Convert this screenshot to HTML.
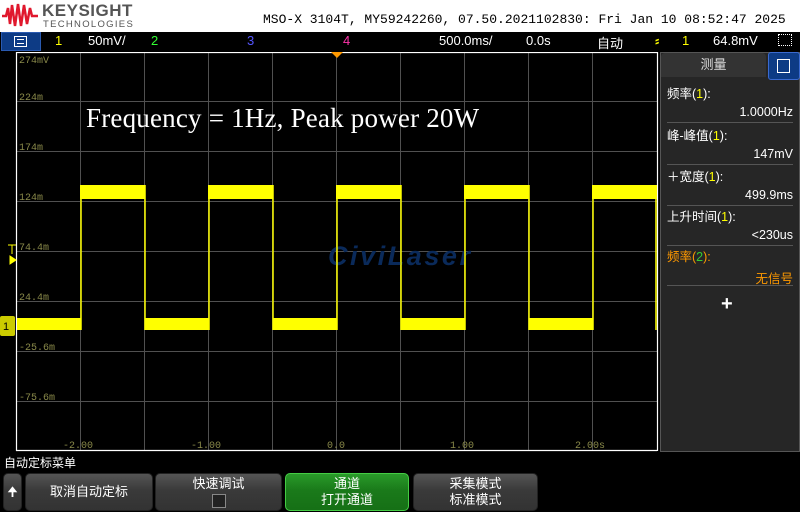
<!DOCTYPE html>
<html><head><meta charset="utf-8"><style>
*{margin:0;padding:0;box-sizing:border-box}
body{width:800px;height:512px;background:#000;overflow:hidden;position:relative;font-family:"Liberation Sans","Noto Sans CJK SC",sans-serif;color:#fff}
.abs{position:absolute}
.top{left:0;top:0;width:800px;height:32px;background:#fff}
.mono{font-family:"Liberation Mono","DejaVu Sans Mono",monospace}
.bar{left:0;top:32px;width:800px;height:20px;background:#000;font-size:13px}
.bar span{position:absolute;top:1px}
.panel{left:660px;top:52px;width:140px;height:400px;background:#262626;border:1px solid #555}
.mrow{position:absolute;left:6px;width:126px;font-size:12.5px;border-bottom:1px solid #555}
.btn{position:absolute;top:473px;height:38px;border-radius:5px;background:linear-gradient(#555,#3a3a3a 45%,#333);border:1px solid #222;font-size:13px;text-align:center;color:#fff;line-height:16px}
</style></head><body>
<div class="abs top">
 <svg class="abs" style="left:2px;top:2px" width="36" height="26" viewBox="0 0 36 26"><path d="M0 14 L4 14 L6 6 L8 22 L10 3 L13 24 L16 2 L19 24 L22 3 L25 22 L28 6 L30 14 L36 14" stroke="#e0182d" stroke-width="2.5" fill="none"/></svg>
 <div class="abs" style="left:42px;top:1px;font-size:17px;font-weight:bold;color:#555;letter-spacing:0.5px">KEYSIGHT</div>
 <div class="abs" style="left:43px;top:19px;font-size:9.5px;color:#555;letter-spacing:1.3px">TECHNOLOGIES</div>
 <div class="abs mono" style="left:263px;top:12px;font-size:13px;color:#000;white-space:nowrap">MSO-X 3104T, MY59242260, 07.50.2021102830: Fri Jan 10 08:52:47 2025</div>
</div>
<div class="abs bar">
 <div class="abs" style="left:1px;top:0;width:40px;height:19px;background:#0d3b85;border:1px solid #2a5ab0"></div>
 <div class="abs" style="left:14px;top:4px;width:13px;height:11px;border:1.5px solid #fff"></div>
 <div class="abs" style="left:17px;top:7px;width:7px;height:5px;border-top:1px solid #fff;border-bottom:1px solid #fff"></div>
 <span style="left:55px;color:#ff0">1</span><span style="left:88px">50mV/</span>
 <span style="left:151px;color:#3f3">2</span><span style="left:247px;color:#55f">3</span><span style="left:343px;color:#f3a">4</span>
 <span style="left:439px">500.0ms/</span><span style="left:526px">0.0s</span><span style="left:597px">自动</span>
 <span style="left:655px;color:#ff0;font-weight:bold">⸗</span><span style="left:682px;color:#ff0">1</span><span style="left:713px">64.8mV</span>
 <div class="abs" style="left:778px;top:2px;width:14px;height:12px;border:1px dotted #fff"></div>
</div>
<svg class="abs" style="left:0;top:52px" width="660" height="400" viewBox="0 52 660 400">
 <g stroke="#505050" stroke-width="1">
  <path d="M80.5 52V451M144.5 52V451M208.5 52V451M272.5 52V451M336.5 52V451M400.5 52V451M464.5 52V451M528.5 52V451M592.5 52V451"/>
  <path d="M16 101.5H657M16 151.5H657M16 201.5H657M16 251.5H657M16 301.5H657M16 351.5H657M16 401.5H657"/>
 </g>
 <path d="M16.5 52V451M16 52.5H657M16 450.5H657M657.5 52V451" stroke="#fff" stroke-width="1.2" fill="none"/>
 <g fill="#8a8a4a" font-family="Liberation Mono,monospace" font-size="10">
  <text x="19" y="63">274mV</text><text x="19" y="100">224m</text><text x="19" y="150">174m</text><text x="19" y="200">124m</text>
  <text x="19" y="250">74.4m</text><text x="19" y="300">24.4m</text><text x="19" y="350">-25.6m</text><text x="19" y="400">-75.6m</text>
  <text x="63" y="448">-2.00</text><text x="191" y="448">-1.00</text><text x="327" y="448">0.0</text><text x="450" y="448">1.00</text><text x="575" y="448">2.00s</text>
 </g>
 <path d="M331 52H343L337 58Z" fill="#f90"/>
 <text x="328" y="265" font-family="Liberation Sans,sans-serif" font-weight="bold" font-style="italic" font-size="27" fill="#0a2a5a" textLength="142">CiviLaser</text>
 <g fill="#ff0">
  <rect x="17" y="318" width="64" height="12"/><rect x="80" y="185" width="65" height="14"/>
  <rect x="145" y="318" width="64" height="12"/><rect x="208" y="185" width="65" height="14"/>
  <rect x="273" y="318" width="64" height="12"/><rect x="336" y="185" width="65" height="14"/>
  <rect x="401" y="318" width="64" height="12"/><rect x="464" y="185" width="65" height="14"/>
  <rect x="529" y="318" width="64" height="12"/><rect x="592" y="185" width="65" height="14"/>
 </g>
 <path d="M81 185V330M145 185V330M209 185V330M273 185V330M337 185V330M401 185V330M465 185V330M529 185V330M593 185V330M656 185V330" stroke="#ff0" stroke-width="1.5"/>
 <path d="M8 245H16M12 245V254M10 256L16 260L10 264Z" stroke="#ff0" fill="#ff0" stroke-width="1"/>
 <rect x="0" y="316" width="15" height="20" fill="#cc0" rx="2"/>
 <text x="3" y="330" font-size="11" fill="#000">1</text>
</svg>
<div class="abs" style="left:86px;top:103px;font-family:'Liberation Serif',serif;font-size:27px;color:#fff;white-space:nowrap;letter-spacing:0.2px">Frequency = 1Hz, Peak power 20W</div>
<div class="abs panel">
 <div class="abs" style="left:0;top:0;width:105px;height:24px;background:#333;border-radius:4px 4px 0 0;text-align:center;font-size:13px;line-height:24px;color:#ddd">测量</div>
 <div class="abs" style="left:107px;top:-1px;width:32px;height:28px;background:#0d3b85;border:1px solid #3a6ad0;border-radius:3px"></div>
 <div class="abs" style="left:116px;top:6px;width:13px;height:14px;border:1.5px solid #fff"></div>
 <div class="mrow" style="top:30px;height:40px"><div>频率(<span style="color:#ff0">1</span>):</div><div style="text-align:right;margin-top:3px">1.0000Hz</div></div>
 <div class="mrow" style="top:72px;height:40px"><div>峰-峰值(<span style="color:#ff0">1</span>):</div><div style="text-align:right;margin-top:3px">147mV</div></div>
 <div class="mrow" style="top:113px;height:40px"><div>＋宽度(<span style="color:#ff0">1</span>):</div><div style="text-align:right;margin-top:3px">499.9ms</div></div>
 <div class="mrow" style="top:153px;height:40px"><div>上升时间(<span style="color:#ff0">1</span>):</div><div style="text-align:right;margin-top:3px">&lt;230us</div></div>
 <div class="mrow" style="top:193px;height:40px;color:#f90"><div>频率(<span style="color:#3c3">2</span>):</div><div style="text-align:right;margin-top:3px">无信号</div></div>
 <div class="abs" style="left:60px;top:240px;font-size:20px;font-weight:bold">+</div>
</div>
<div class="abs" style="left:4px;top:454px;font-size:12px">自动定标菜单</div>
<div class="btn" style="left:3px;width:19px;line-height:36px">🠉</div>
<div class="btn" style="left:25px;width:128px;line-height:36px">取消自动定标</div>
<div class="btn" style="left:155px;width:127px;padding-top:2px">快速调试<div style="width:14px;height:14px;border:1px solid #888;background:#222;margin:2px auto 0"></div></div>
<div class="btn" style="left:285px;width:124px;background:linear-gradient(#2a9a2a,#1a7a1a 45%,#167016);border-color:#4c4;padding-top:2px">通道<br>打开通道</div>
<div class="btn" style="left:413px;width:125px;padding-top:2px">采集模式<br>标准模式</div>
</body></html>
